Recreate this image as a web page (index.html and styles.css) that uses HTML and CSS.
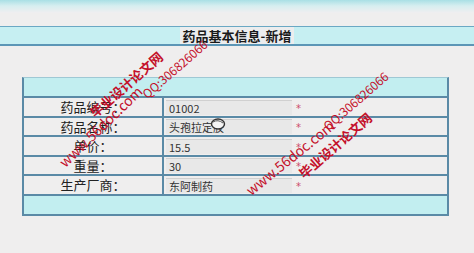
FILE: index.html
```html
<!DOCTYPE html>
<html lang="zh">
<head>
<meta charset="utf-8">
<link rel="stylesheet" href="styles.css">
</head>
<body>
<div class="topbar"></div>
<div class="titleband"><div class="title">药品基本信息-新增</div></div>
<div class="form">
  <div class="band head"></div>
  <div class="row"><div class="label">药品编号：</div><div class="cell"><div class="input">01002</div><span class="req">*</span></div></div>
  <div class="row"><div class="label">药品名称：</div><div class="cell"><div class="input">头孢拉定胶</div><span class="req">*</span></div></div>
  <div class="row"><div class="label">单价：</div><div class="cell"><div class="input">15.5</div><span class="req">*</span></div></div>
  <div class="row"><div class="label">重量：</div><div class="cell"><div class="input">30</div><span class="req">*</span></div></div>
  <div class="row"><div class="label">生产厂商：</div><div class="cell"><div class="input">东阿制药</div><span class="req">*</span></div></div>
  <div class="band foot"></div>
</div>
<svg class="cursor" width="16" height="14" viewBox="0 0 16 14"><ellipse cx="8" cy="7" rx="6.5" ry="5" fill="#f4f4f4" stroke="#333" stroke-width="1.4"/><path d="M3 5 Q8 2 13 6" fill="none" stroke="#555" stroke-width="1"/></svg>
<div class="wm w1">毕业设计论文网</div>
<div class="wm w2">QQ:306826066</div>
<div class="wm w3">www.56doc.com</div>
<div class="wm w4">毕业设计论文网</div>
<div class="wm w5">QQ:306826066</div>
<div class="wm w6">www.56doc.com</div>
</body>
</html>
```
FILE: styles.css
```css
html, body {
  margin: 0;
  padding: 0;
}
body {
  width: 474px;
  height: 253px;
  background: #efeeee;
  font-family: "Noto Sans CJK SC", "Liberation Sans", sans-serif;
  overflow: hidden;
  position: relative;
}
.topbar {
  height: 13px;
  background: linear-gradient(#a9dfe5, #d6eef0 45%, #f0eef0);
}
.titleband {
  margin-top: 13px;
  height: 17px;
  border-top: 1px solid #6aa8c4;
  border-bottom: 2px solid #5c96b6;
  background: #c6eff2;
  display: flex;
  justify-content: center;
}
.title {
  width: 114px;
  background: #ecedee;
  text-align: center;
  font-weight: bold;
  font-size: 13px;
  line-height: 17px;
  color: #1a1a1a;
}
.form {
  margin: 31px 0 0 22px;
  width: 423px;
  border-left: 2px solid #5a8aa6;
  border-right: 2px solid #5a8aa6;
  border-bottom: 2px solid #5a8aa6;
  border-top: 1px solid #9fc8d4;
}
.band {
  background: #c2eef0;
}
.head { height: 18px; }
.foot { height: 18px; border-top: 2px solid #5a8aa6; }
.row {
  display: grid;
  grid-template-columns: 140px 1fr;
  height: 17.5px;
  border-top: 2px solid #5a8aa6;
}
.label {
  border-right: 2px solid #5a8aa6;
  text-align: center;
  font-size: 13px;
  line-height: 18px;
  color: #222;
}
.cell {
  display: flex;
  align-items: center;
  padding-left: 2px;
}
.input {
  width: 126px;
  height: 15px;
  background: #e8e8e8;
  border-top: 1px solid #d0d0d0;
  font-size: 11px;
  line-height: 15px;
  padding-left: 3px;
  box-sizing: border-box;
  color: #333;
  overflow: hidden;
  white-space: nowrap;
}
.req {
  margin-left: 4px;
  color: #cc4a6a;
  font-size: 10px;
  line-height: 10px;
  padding-top: 3px;
  font-family: "DejaVu Sans", sans-serif;
}
.cursor {
  position: absolute;
  left: 210px;
  top: 117px;
}
.wm {
  position: absolute;
  color: #c4102a;
  font-weight: bold;
  white-space: nowrap;
  transform-origin: 0 100%;
  transform: rotate(-41deg);
  font-size: 13px;
  line-height: 13px;
}
.w1 { left: 96px; top: 106px; font-size: 13px; }
.w2 { left: 148px; top: 88px; font-weight: normal; font-size: 12px; line-height: 12px; }
.w3 { left: 66px; top: 155px; font-weight: normal; font-size: 14px; line-height: 14px; transform: rotate(-44deg); }
.w4 { left: 305px; top: 167px; font-size: 13px; }
.w5 { left: 329px; top: 120px; font-weight: normal; font-size: 12px; line-height: 12px; }
.w6 { left: 252px; top: 183px; font-weight: normal; font-size: 14px; line-height: 14px; transform: rotate(-39deg); }
```
